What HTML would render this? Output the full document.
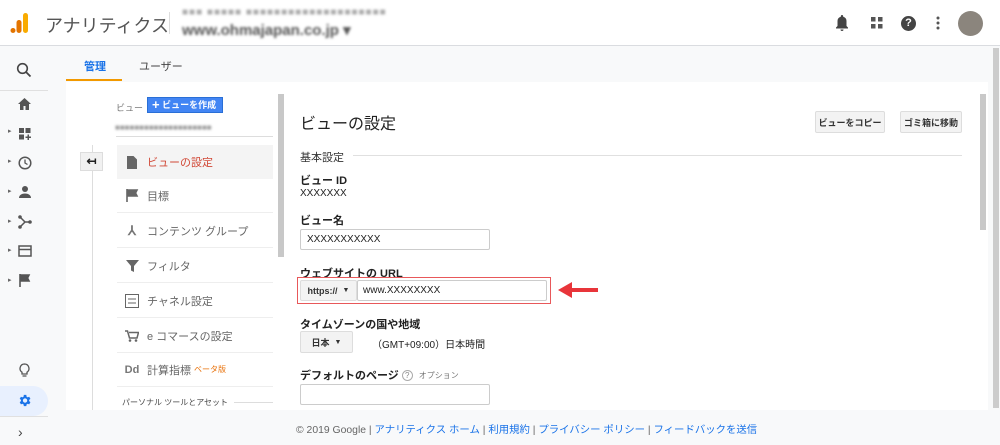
<!DOCTYPE html><html><head><meta charset="utf-8"><style>
*{box-sizing:border-box;margin:0;padding:0}
body{width:1000px;height:445px;overflow:hidden;background:#f8f9fa;font-family:"Liberation Sans","Noto Sans CJK JP",sans-serif;color:#222;position:relative}
.a{position:absolute}
.blur{filter:blur(1.3px);color:#666}
.menu{left:117px;width:156px;height:34px;border-bottom:1px solid #eee;font-size:11px;color:#666;display:flex;align-items:center}
.menu .ic{width:30px;display:flex;justify-content:center;color:#777}
.lbl{left:300px;font-size:11px;font-weight:bold;color:#222;white-space:nowrap}
.inp{border:1px solid #ccc;background:#fff;border-radius:2px}
.btn{border:1px solid #ddd;background:#f3f3f3;font-size:9px;font-weight:bold;color:#333;display:flex;align-items:center;justify-content:center;border-radius:2px}
</style></head><body>
<div class="a" style="left:0;top:0;width:1000px;height:46px;background:#fff;border-bottom:1px solid #dadce0"></div>
<svg class="a" style="left:10px;top:12px" width="22" height="22"><rect x="13" y="1" width="5" height="20" rx="2.5" fill="#f9ab00"/><rect x="6.5" y="8" width="5" height="13" rx="2.5" fill="#e37400"/><circle cx="3" cy="18.5" r="2.5" fill="#e37400"/></svg>
<div class="a" style="left:45px;top:12px;font-size:18px;color:#555">アナリティクス</div>
<div class="a" style="left:169px;top:12px;width:1px;height:22px;background:#ddd"></div>
<div class="a blur" style="left:182px;top:7px;font-size:10px;color:#aaa;letter-spacing:1px">■■■ ■■■■■ ■■■■■■■■■■■■■■■■■■■■</div>
<div class="a blur" style="left:182px;top:21px;font-size:15px;color:#555;font-weight:bold">www.ohmajapan.co.jp ▾</div>
<svg class="a" style="left:834px;top:14px" width="16" height="18"><path d="M8 1a1.2 1.2 0 0 1 1.2 1.2v.6A4.5 4.5 0 0 1 12.5 7v5l1.5 1.5v1H2v-1L3.5 12V7A4.5 4.5 0 0 1 6.8 2.8v-.6A1.2 1.2 0 0 1 8 1zM6.5 15.5h3a1.5 1.5 0 0 1-3 0z" fill="#444"/></svg>
<svg class="a" style="left:871px;top:17px" width="12" height="12" fill="#555"><rect x="0" y="0" width="4.5" height="4.5"/><rect x="7" y="0" width="4.5" height="4.5"/><rect x="0" y="7" width="4.5" height="4.5"/><rect x="7" y="7" width="4.5" height="4.5"/></svg>
<div class="a" style="left:901px;top:16px;width:15px;height:15px;border-radius:50%;background:#444;color:#fff;font-size:11px;font-weight:bold;text-align:center;line-height:15px">?</div>
<svg class="a" style="left:936px;top:16px" width="4" height="14" fill="#555"><circle cx="2" cy="2" r="1.5"/><circle cx="2" cy="7" r="1.5"/><circle cx="2" cy="12" r="1.5"/></svg>
<div class="a" style="left:958px;top:11px;width:25px;height:25px;border-radius:50%;background:#8b857d"></div>
<div class="a" style="left:0;top:47px;width:48px;height:398px;background:#f8f9fa"></div>
<svg class="a" style="left:16px;top:62px" width="16" height="16"><circle cx="6.5" cy="6.5" r="4.8" stroke="#444" stroke-width="1.6" fill="none"/><path d="M10 10l4.5 4.5" stroke="#444" stroke-width="1.8"/></svg>
<div class="a" style="left:0;top:90px;width:48px;height:1px;background:#e0e0e0"></div>
<svg class="a" style="left:18px;top:98px" width="13" height="12"><path d="M6.5 0L0 6h2v6h3.5V8h2v4H11V6h2z" fill="#555"/></svg>
<div class="a" style="left:8px;top:127px;font-size:7px;color:#666">▸</div>
<svg class="a" style="left:19px;top:128px" width="12" height="12" fill="#555"><rect x="0" y="0" width="5" height="5"/><rect x="6.5" y="0" width="5" height="5"/><rect x="0" y="6.5" width="5" height="5"/><path d="M8.5 6.5h1.5v2h2v1.5h-2v2H8.5v-2h-2V8.5h2z"/></svg>
<div class="a" style="left:8px;top:157px;font-size:7px;color:#666">▸</div>
<svg class="a" style="left:18px;top:156px" width="14" height="14"><circle cx="7" cy="7" r="5.8" stroke="#555" stroke-width="1.5" fill="none"/><path d="M7 3.5V7l2.5 1.5" stroke="#555" stroke-width="1.3" fill="none"/></svg>
<div class="a" style="left:8px;top:187px;font-size:7px;color:#666">▸</div>
<svg class="a" style="left:19px;top:186px" width="12" height="12" fill="#555"><circle cx="6" cy="3" r="3"/><path d="M0 12c0-3 3-4.5 6-4.5s6 1.5 6 4.5z"/></svg>
<div class="a" style="left:8px;top:217px;font-size:7px;color:#666">▸</div>
<svg class="a" style="left:18px;top:215px" width="14" height="14"><path d="M2 2l5 5-5 5M7 7h5" stroke="#555" stroke-width="1.5" fill="none"/><circle cx="2" cy="2" r="1.8" fill="#555"/><circle cx="2" cy="12" r="1.8" fill="#555"/><circle cx="12" cy="7" r="1.8" fill="#555"/></svg>
<div class="a" style="left:8px;top:246px;font-size:7px;color:#666">▸</div>
<svg class="a" style="left:18px;top:245px" width="14" height="12"><rect x="1" y="1" width="12" height="10" stroke="#555" stroke-width="1.5" fill="none"/><path d="M1 4.5h12" stroke="#555" stroke-width="1.5"/></svg>
<div class="a" style="left:8px;top:276px;font-size:7px;color:#666">▸</div>
<svg class="a" style="left:19px;top:274px" width="12" height="13"><path d="M1 0v13M1 1h9l-1.5 3L10 7H1" stroke="#555" stroke-width="1.6" fill="#555"/></svg>
<svg class="a" style="left:19px;top:363px" width="11" height="15"><path d="M5.5 1a4.5 4.5 0 0 0-2.5 8.2V11h5V9.2A4.5 4.5 0 0 0 5.5 1zM3.5 13h4" stroke="#555" stroke-width="1.3" fill="none"/></svg>
<div class="a" style="left:0;top:386px;width:48px;height:30px;background:#e8f0fe;border-radius:0 15px 15px 0"></div>
<svg class="a" style="left:17px;top:393px" width="15" height="15" viewBox="0 0 24 24"><path fill="#1a73e8" d="M19.4 13a7.5 7.5 0 0 0 0-2l2.1-1.6-2-3.5-2.5 1a7.3 7.3 0 0 0-1.7-1L14.9 3h-4l-.4 2.9a7.3 7.3 0 0 0-1.7 1l-2.5-1-2 3.5L6.4 11a7.5 7.5 0 0 0 0 2l-2.1 1.6 2 3.5 2.5-1a7.3 7.3 0 0 0 1.700 1l.4 2.9h4l.4-2.9a7.3 7.3 0 0 0 1.7-1l2.5 1 2-3.5zM12.9 15.5a3.5 3.5 0 1 1 0-7 3.5 3.5 0 0 1 0 7z"/></svg>
<div class="a" style="left:0;top:416px;width:48px;height:1px;background:#e0e0e0"></div>
<div class="a" style="left:18px;top:424px;font-size:14px;color:#444">›</div>
<div class="a" style="left:84px;top:58px;font-size:11px;color:#1a73e8;font-weight:bold">管理</div>
<div class="a" style="left:66px;top:79px;width:56px;height:2px;background:#f29900"></div>
<div class="a" style="left:139px;top:58px;font-size:11px;color:#444">ユーザー</div>
<div class="a" style="left:66px;top:82px;width:922px;height:328px;background:#fff"></div>
<div class="a" style="left:92px;top:145px;width:1px;height:265px;background:#ddd"></div>
<div class="a" style="left:80px;top:152px;width:23px;height:19px;background:#f1f1f1;border:1px solid #ddd;font-size:12px;text-align:center;line-height:16px;font-weight:bold">↤</div>
<div class="a" style="left:116px;top:101px;font-size:9px;color:#777">ビュー</div>
<div class="a" style="left:147px;top:97px;width:76px;height:16px;background:#4285f4;border:1px solid #2a6fd6;color:#fff;font-size:9px;font-weight:bold;line-height:14px;padding-left:4px"><span style="font-size:13px;vertical-align:-1px">+</span> ビューを作成</div>
<div class="a blur" style="left:115px;top:123px;font-size:8px;color:#999">■■■■■■■■■■■■■■■■■■■■</div>
<div class="a" style="left:116px;top:136px;width:157px;height:1px;background:#ddd"></div>
<div class="a menu" style="top:145px;background:#f4f4f4;border:none;color:#d14836"><span class="ic"><svg width="10" height="13"><path d="M0 0h6.5L10 3.5V13H0z" fill="#666"/></svg></span>ビューの設定</div>
<div class="a menu" style="top:179px"><span class="ic"><svg width="13" height="13"><path d="M1 0v13M1 1h10l-1.5 3L11 7H1" stroke="#666" stroke-width="1.6" fill="#666"/></svg></span>目標</div>
<div class="a menu" style="top:214px"><span class="ic" style="font-weight:bold;font-size:13px">⅄</span>コンテンツ グループ</div>
<div class="a menu" style="top:249px"><span class="ic"><svg width="13" height="12"><path d="M0 0h13L8 6v6l-3-1.5V6z" fill="#666"/></svg></span>フィルタ</div>
<div class="a menu" style="top:284px"><span class="ic"><svg width="14" height="14"><rect x=".5" y=".5" width="13" height="13" stroke="#666" fill="none"/><path d="M3 5h8M3 9h8" stroke="#666"/></svg></span>チャネル設定</div>
<div class="a menu" style="top:319px"><span class="ic"><svg width="14" height="12"><path d="M0 1h2.5l2 7h7.5l1.5-5.5H4" stroke="#666" stroke-width="1.5" fill="none"/><circle cx="5" cy="10.5" r="1.3" fill="#666"/><circle cx="11" cy="10.5" r="1.3" fill="#666"/></svg></span>e コマースの設定</div>
<div class="a menu" style="top:353px"><span class="ic" style="font-weight:bold;font-size:11px">Dd</span>計算指標 <span style="color:#e8710a;font-size:8px;margin-left:3px">ベータ版</span></div>
<div class="a" style="left:122px;top:397px;font-size:8px;color:#444">パーソナル ツールとアセット</div>
<div class="a" style="left:234px;top:402px;width:39px;height:1px;background:#ddd"></div>
<div class="a" style="left:278px;top:94px;width:6px;height:163px;background:#c8c8c8"></div>
<div class="a" style="left:300px;top:110px;font-size:16px;color:#222">ビューの設定</div>
<div class="a btn" style="left:815px;top:111px;width:70px;height:22px">ビューをコピー</div>
<div class="a btn" style="left:900px;top:111px;width:62px;height:22px">ゴミ箱に移動</div>
<div class="a" style="left:300px;top:149px;font-size:11px;color:#333">基本設定</div>
<div class="a" style="left:353px;top:155px;width:609px;height:1px;background:#e0e0e0"></div>
<div class="a lbl" style="top:172px">ビュー ID</div>
<div class="a" style="left:300px;top:188px;font-size:10px">XXXXXXX</div>
<div class="a lbl" style="top:212px">ビュー名</div>
<div class="a inp" style="left:300px;top:229px;width:190px;height:21px;font-size:10px;padding:4px 6px">XXXXXXXXXXX</div>
<div class="a lbl" style="top:265px">ウェブサイトの URL</div>
<div class="a" style="left:297px;top:277px;width:254px;height:27px;border:1.5px solid #e8585a"></div>
<div class="a btn" style="left:300px;top:280px;width:57px;height:21px;font-size:9px">https:// &nbsp;<span style="font-size:7px">▼</span></div>
<div class="a inp" style="left:357px;top:280px;width:190px;height:21px;font-size:10px;padding:4px 5px">www.XXXXXXXX</div>
<svg class="a" style="left:558px;top:282px" width="40" height="16"><path d="M12 6h28v4H12z" fill="#e8353a"/><path d="M0 8l14-8v16z" fill="#e8353a"/></svg>
<div class="a lbl" style="top:316px">タイムゾーンの国や地域</div>
<div class="a btn" style="left:300px;top:331px;width:53px;height:22px">日本 &nbsp;<span style="font-size:7px">▼</span></div>
<div class="a" style="left:372px;top:336px;font-size:10px">（GMT+09:00）日本時間</div>
<div class="a lbl" style="top:367px;display:flex;align-items:center">デフォルトのページ<span style="margin-left:3px;width:11px;height:11px;border:1px solid #aaa;border-radius:50%;font-size:8px;color:#888;text-align:center;line-height:10px;font-weight:normal">?</span><span style="margin-left:6px;font-size:8px;color:#777;font-weight:normal">オプション</span></div>
<div class="a inp" style="left:300px;top:384px;width:190px;height:21px"></div>
<div class="a" style="left:980px;top:94px;width:6px;height:136px;background:#c8c8c8"></div>
<div class="a" style="left:993px;top:48px;width:6px;height:360px;background:#ccc"></div>
<div class="a" style="left:296px;top:421px;font-size:10.4px;color:#666;white-space:nowrap">© 2019 Google | <span style="color:#1a73e8">アナリティクス ホーム</span> | <span style="color:#1a73e8">利用規約</span> | <span style="color:#1a73e8">プライバシー ポリシー</span> | <span style="color:#1a73e8">フィードバックを送信</span></div>
</body></html>
